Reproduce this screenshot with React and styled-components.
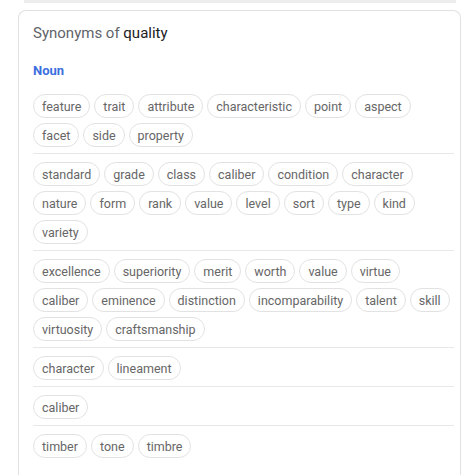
import styled, { createGlobalStyle } from "styled-components";

const Global = createGlobalStyle`
    body {
        margin: 0;
        background: #fff;
        font-family: Roboto, "Liberation Sans", Arial, sans-serif;
    }
`;

const Strip = styled.div`
    height: 3px;
    margin: 0 18px 0 24px;
    background: #ededed;
`;

const Card = styled.div`
    margin: 7px 13px 0 18px;
    border: 1px solid #dfe1e5;
    border-bottom: none;
    border-radius: 8px 8px 0 0;
    padding: 12px 6px 20px 14px;
    height: 465px;
    box-sizing: border-box;
`;

const Title = styled.h2`
    margin: 0;
    font-size: 15px;
    line-height: 20px;
    font-weight: 400;
    color: #5f6368;

    b {
        font-weight: 400;
        color: #202124;
    }
`;

const Pos = styled.div`
    margin-top: 18px;
    font-size: 13px;
    line-height: 20px;
    font-weight: 700;
    color: #3b6fe0;
`;

const Group = styled.div`
    display: flex;
    flex-wrap: wrap;
    gap: 5px 4px;
    padding: ${(p) => (p.$first ? "13px 0 6px" : "8px 0 6px")};
    border-top: ${(p) => (p.$first ? "none" : "1px solid #e8e8e8")};
`;

const Chip = styled.span`
    display: inline-flex;
    align-items: center;
    height: 24px;
    box-sizing: border-box;
    padding: 0 8px;
    border: 1px solid #e2e2e2;
    border-radius: 12px;
    font-size: 12.5px;
    color: #666;
    white-space: nowrap;
`;

const groups = [
    ["feature", "trait", "attribute", "characteristic", "point", "aspect", "facet", "side", "property"],
    ["standard", "grade", "class", "caliber", "condition", "character", "nature", "form", "rank", "value", "level", "sort", "type", "kind", "variety"],
    ["excellence", "superiority", "merit", "worth", "value", "virtue", "caliber", "eminence", "distinction", "incomparability", "talent", "skill", "virtuosity", "craftsmanship"],
    ["character", "lineament"],
    ["caliber"],
    ["timber", "tone", "timbre"],
];

export default function App() {
    return (
        <>
            <Global />
            <Strip />
            <Card>
                <Title>
                    Synonyms of <b>quality</b>
                </Title>
                <Pos>Noun</Pos>
                {groups.map((words, i) => (
                    <Group key={i} $first={i === 0}>
                        {words.map((w, j) => (
                            <Chip key={j}>{w}</Chip>
                        ))}
                    </Group>
                ))}
            </Card>
        </>
    );
}
